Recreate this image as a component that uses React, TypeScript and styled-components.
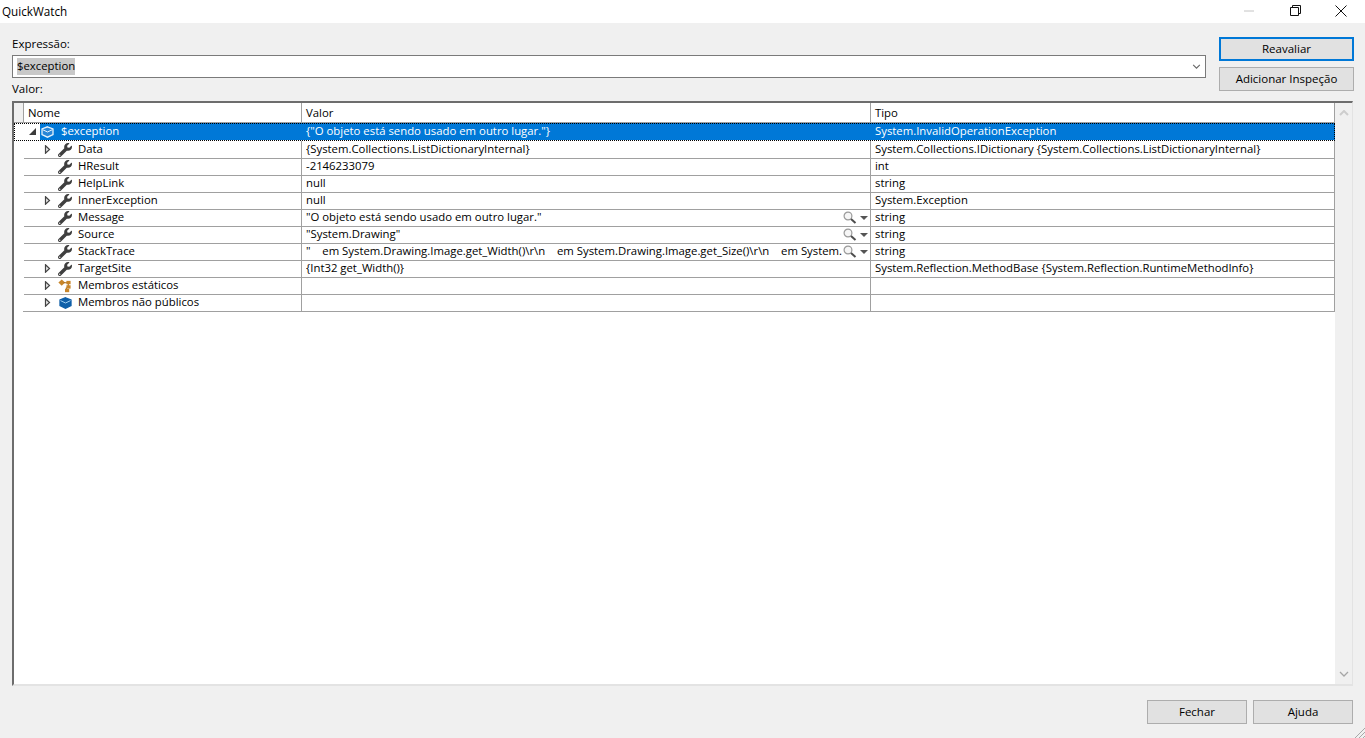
import styled, { createGlobalStyle } from "styled-components";
import { FaWrench } from "react-icons/fa";

const GlobalStyle = createGlobalStyle`
  html, body {
    margin: 0;
    padding: 0;
    background: #f0f0f0;
  }
  body {
    font-family: "Open Sans", "Liberation Sans", sans-serif;
    font-size: 11.5px;
    color: #000;
    overflow: hidden;
  }
`;

const Window = styled.div`
  width: 1365px;
  height: 738px;
  display: flex;
  flex-direction: column;
  position: relative;
  background: #f0f0f0;
`;

const TitleBar = styled.header`
  height: 23px;
  box-sizing: border-box;
  background: #fff;
  display: flex;
  align-items: center;
  justify-content: space-between;
  padding: 0 0 2px 2px;
  font-size: 11.7px;
`;

const WindowControls = styled.div`
  display: flex;
  align-items: center;
  height: 100%;
  padding-right: 1px;
`;

const WindowControl = styled.div`
  width: 46px;
  height: 100%;
  display: flex;
  align-items: center;
  justify-content: center;
`;

const TopSection = styled.section`
  display: grid;
  grid-template-columns: 1194px 135px;
  column-gap: 13px;
  padding: 14px 0 0 12px;
  height: 78px;
  box-sizing: border-box;
`;

const Fields = styled.div`
  display: flex;
  flex-direction: column;
`;

const FieldLabel = styled.label<{ $tight?: boolean }>`
  height: 18px;
  line-height: ${(p) => (p.$tight ? "12px" : "14px")};
`;

const Combo = styled.div`
  height: 23px;
  box-sizing: border-box;
  border: 1px solid #7a7a7a;
  background: #fff;
  display: flex;
  align-items: center;
  justify-content: space-between;
  padding: 0 4px 0 4px;
  margin-bottom: 5px;
`;

const SelectedText = styled.span`
  background: #c8c8c8;
  height: 17px;
  line-height: 15px;
  font-size: 11.35px;
`;

const ButtonColumn = styled.div`
  display: flex;
  flex-direction: column;
  gap: 6px;
`;

const DialogButton = styled.button<{ $primary?: boolean; $wide?: boolean }>`
  height: 24px;
  width: ${(p) => (p.$wide ? "135px" : "100px")};
  box-sizing: border-box;
  border: ${(p) => (p.$primary ? "2px solid #0078d7" : "1px solid #adadad")};
  background: #e1e1e1;
  font: inherit;
  color: #000;
  padding: 0 0 2px;
`;

const Panel = styled.section`
  width: 1341px;
  height: 585px;
  margin-left: 12px;
  box-sizing: border-box;
  display: flex;
  border-top: 2px solid #6d6d6d;
  border-left: 2px solid #6d6d6d;
  border-right: 1px solid #e3e3e3;
  border-bottom: 2px solid #e3e3e3;
  background: #fff;
  font-size: 11.35px;
`;

const Tree = styled.div`
  width: 1321px;
  display: flex;
  flex-direction: column;
`;

const Row = styled.div<{ $selected?: boolean; $head?: boolean }>`
  display: grid;
  grid-template-columns: 9px 279px 569px 464px;
  height: ${(p) => (p.$head ? "20px" : p.$selected ? "18px" : "17px")};
  outline: ${(p) => (p.$selected ? "1px dotted #000" : "none")};
  outline-offset: -1px;
  flex: none;
`;

const Gutter = styled.div<{ $head?: boolean }>`
  background: ${(p) => (p.$head ? "#f0f0f0" : "#fff")};
  border-right: ${(p) => (p.$head ? "1px solid #a0a0a0" : "none")};
  border-bottom: ${(p) => (p.$head ? "1px solid #a0a0a0" : "none")};
  margin-right: -1px;
`;

const Cell = styled.div<{ $selected?: boolean }>`
  box-sizing: border-box;
  min-width: 0;
  display: flex;
  align-items: center;
  overflow: hidden;
  white-space: pre;
  padding-left: 4px;
  border-bottom: ${(p) => (p.$selected ? "1px solid #fff" : "1px solid #a0a0a0")};
  border-right: ${(p) => (p.$selected ? "none" : "1px solid #a0a0a0")};
  background: ${(p) => (p.$selected ? "#0078d7" : "transparent")};
  color: ${(p) => (p.$selected ? "#fff" : "#000")};
`;

const HeadCell = styled(Cell)`
  padding-left: 5px;
`;

const NameCell = styled.div<{ $selected?: boolean }>`
  box-sizing: border-box;
  display: flex;
  align-items: stretch;
  padding-left: ${(p) => (p.$selected ? "3px" : "18px")};
  border-bottom: ${(p) => (p.$selected ? "1px solid #fff" : "1px solid #a0a0a0")};
  border-right: ${(p) => (p.$selected ? "none" : "1px solid #a0a0a0")};
`;

const ArrowSlot = styled.div`
  width: 12px;
  flex: none;
  display: flex;
  align-items: center;
  justify-content: center;
`;

const NameLabel = styled.div<{ $selected?: boolean }>`
  flex: 1;
  display: flex;
  align-items: center;
  gap: ${(p) => (p.$selected ? "7px" : "6px")};
  margin-left: ${(p) => (p.$selected ? "2px" : "5px")};
  padding-left: ${(p) => (p.$selected ? "1px" : "0")};
  background: ${(p) => (p.$selected ? "#0078d7" : "transparent")};
  color: ${(p) => (p.$selected ? "#fff" : "#000")};
  white-space: pre;
`;

const IconSlot = styled.span`
  width: 14px;
  height: 14px;
  flex: none;
  display: flex;
  align-items: center;
  justify-content: center;
  color: #3f3f3f;
`;

const RowText = styled.span`
  flex: 1;
  min-width: 0;
  overflow: hidden;
  padding-bottom: 2px;
`;

const Tools = styled.span`
  flex: none;
  width: 27px;
  display: flex;
  align-items: center;
  gap: 3px;
`;

const Scrollbar = styled.div`
  width: 17px;
  background: #f0f0f0;
  display: flex;
  flex-direction: column;
  justify-content: space-between;
  align-items: center;
  padding: 7px 0;
  box-sizing: border-box;
`;

const Footer = styled.footer`
  display: flex;
  justify-content: flex-end;
  gap: 6px;
  padding: 14px 12px 0 0;
`;

const Grip = styled.svg`
  position: absolute;
  right: 0;
  bottom: 0;
`;

const Collapsed = () => (
  <svg width="7" height="9" viewBox="0 0 7 9">
    <path d="M1.5 .8 L5.5 4.5 L1.5 8.2 Z" fill="#e8e8e8" stroke="#444" strokeWidth="1.2" />
  </svg>
);

const Expanded = () => (
  <svg width="9" height="9" viewBox="0 0 9 9">
    <path d="M8 1 V8 H1 Z" fill="#3c3c3c" />
  </svg>
);

const ObjectIcon = ({ light }: { light?: boolean }) => (
  <svg width="13" height="12" viewBox="0 0 13 12">
    <path
      d="M6.5 .8 L12 3 V8.6 L6.5 11.2 L1 8.6 V3 Z"
      fill={light ? "#2a86d6" : "#0e5fa8"}
      stroke={light ? "#e6f2fb" : "#0e5fa8"}
      strokeWidth="1.3"
    />
    <path
      d="M1.5 3.6 L6.5 6 L11.5 3.6"
      fill="none"
      stroke={light ? "#e6f2fb" : "#9ccdf2"}
    />
  </svg>
);

const StaticIcon = () => (
  <svg width="15" height="14" viewBox="0 0 15 14">
    <path d="M4 0 L7.6 3.2 L4 6.6 L.4 3.2 Z" fill="#c8862a" />
    <path d="M6 3.5 H11 V8.5 M9 8.5 V11" fill="none" stroke="#a66a18" strokeWidth="1.2" />
    <rect x="9" y="1.5" width="4.5" height="3.6" fill="#c8862a" />
    <rect x="9" y="6.2" width="4.5" height="3.6" fill="#c8862a" />
    <rect x="7.5" y="10" width="4.5" height="3.6" fill="#c8862a" />
  </svg>
);

const Magnifier = () => (
  <svg width="14" height="13" viewBox="0 0 14 13">
    <circle cx="5" cy="5" r="3.9" fill="#f6f6f6" stroke="#9a9a9a" strokeWidth="1.2" />
    <path d="M8 8 L12.5 12" stroke="#4d4d4d" strokeWidth="2" />
  </svg>
);

const DropTriangle = () => (
  <svg width="8" height="4" viewBox="0 0 8 4">
    <path d="M0 0 H8 L4 4 Z" fill="#555" />
  </svg>
);

const Chevron = ({ up, color, small }: { up?: boolean; color: string; small?: boolean }) => (
  <svg width={small ? 9 : 10} height={small ? 5 : 6} viewBox="0 0 10 6">
    <path
      d={up ? "M1 5 L5 1 L9 5" : "M1 1 L5 5 L9 1"}
      fill="none"
      stroke={color}
      strokeWidth={up ? 2 : 1.3}
    />
  </svg>
);

type Member = {
  name: string;
  value?: string;
  type?: string;
  arrow?: boolean;
  tools?: boolean;
  icon?: "wrench" | "static" | "object";
};

const members: Member[] = [
  { name: "Data", value: "{System.Collections.ListDictionaryInternal}", type: "System.Collections.IDictionary {System.Collections.ListDictionaryInternal}", arrow: true },
  { name: "HResult", value: "-2146233079", type: "int" },
  { name: "HelpLink", value: "null", type: "string" },
  { name: "InnerException", value: "null", type: "System.Exception", arrow: true },
  { name: "Message", value: '"O objeto está sendo usado em outro lugar."', type: "string", tools: true },
  { name: "Source", value: '"System.Drawing"', type: "string", tools: true },
  { name: "StackTrace", value: '"    em System.Drawing.Image.get_Width()\\r\\n    em System.Drawing.Image.get_Size()\\r\\n    em System.', type: "string", tools: true },
  { name: "TargetSite", value: "{Int32 get_Width()}", type: "System.Reflection.MethodBase {System.Reflection.RuntimeMethodInfo}", arrow: true },
  { name: "Membros estáticos", arrow: true, icon: "static" },
  { name: "Membros não públicos", arrow: true, icon: "object" },
];

const MemberRow = ({ member }: { member: Member }) => (
  <Row>
    <Gutter />
    <NameCell>
      <ArrowSlot>{member.arrow && <Collapsed />}</ArrowSlot>
      <NameLabel>
        <IconSlot>
          {member.icon === "static" ? (
            <StaticIcon />
          ) : member.icon === "object" ? (
            <ObjectIcon />
          ) : (
            <FaWrench size={14} />
          )}
        </IconSlot>
        <RowText>{member.name}</RowText>
      </NameLabel>
    </NameCell>
    <Cell>
      <RowText>{member.value}</RowText>
      {member.tools && (
        <Tools>
          <Magnifier />
          <DropTriangle />
        </Tools>
      )}
    </Cell>
    <Cell>
      <RowText>{member.type}</RowText>
    </Cell>
  </Row>
);

export default function App() {
  return (
    <Window>
      <GlobalStyle />
      <TitleBar>
        QuickWatch
        <WindowControls>
          <WindowControl>
            <svg width="12" height="2" viewBox="0 0 12 2">
              <path d="M1 1 H11" stroke="#c4c4c4" />
            </svg>
          </WindowControl>
          <WindowControl>
            <svg width="11" height="11" viewBox="0 0 11 11">
              <path d="M.5 2.5 H8.5 V10.5 H.5 Z M2.5 2.5 V.5 H10.5 V8.5 H8.5" fill="none" stroke="#111" />
            </svg>
          </WindowControl>
          <WindowControl>
            <svg width="12" height="12" viewBox="0 0 12 12">
              <path d="M.5 .5 L11.5 11.5 M11.5 .5 L.5 11.5" stroke="#111" />
            </svg>
          </WindowControl>
        </WindowControls>
      </TitleBar>

      <TopSection>
        <Fields>
          <FieldLabel>Expressão:</FieldLabel>
          <Combo>
            <SelectedText>$exception</SelectedText>
            <Chevron small color="#666" />
          </Combo>
          <FieldLabel $tight>Valor:</FieldLabel>
        </Fields>
        <ButtonColumn>
          <DialogButton $primary $wide>Reavaliar</DialogButton>
          <DialogButton $wide>Adicionar Inspeção</DialogButton>
        </ButtonColumn>
      </TopSection>

      <Panel>
        <Tree>
          <Row $head>
            <Gutter $head />
            <HeadCell>Nome</HeadCell>
            <Cell>Valor</Cell>
            <Cell>Tipo</Cell>
          </Row>
          <Row $selected>
            <Gutter />
            <NameCell $selected>
              <ArrowSlot>
                <Expanded />
              </ArrowSlot>
              <NameLabel $selected>
                <ObjectIcon light />
                <RowText>$exception</RowText>
              </NameLabel>
            </NameCell>
            <Cell $selected>
              <RowText>{'{"O objeto está sendo usado em outro lugar."}'}</RowText>
            </Cell>
            <Cell $selected>
              <RowText>System.InvalidOperationException</RowText>
            </Cell>
          </Row>
          {members.map((m) => (
            <MemberRow key={m.name} member={m} />
          ))}
        </Tree>
        <Scrollbar>
          <Chevron up color="#cdcdcd" />
          <Chevron color="#a6a6a6" />
        </Scrollbar>
      </Panel>

      <Footer>
        <DialogButton>Fechar</DialogButton>
        <DialogButton>Ajuda</DialogButton>
      </Footer>

      <Grip width="11" height="11" viewBox="0 0 11 11">
        <path d="M11 1 L1 11 M11 5 L5 11 M11 9 L9 11" stroke="#a8a8a8" />
      </Grip>
    </Window>
  );
}
